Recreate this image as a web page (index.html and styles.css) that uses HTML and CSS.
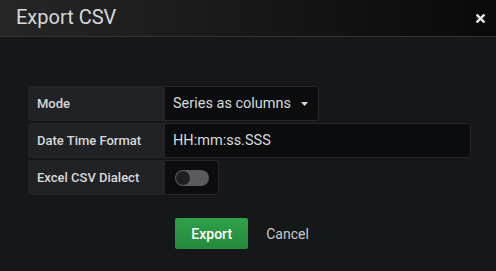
FILE: index.html
```html
<!DOCTYPE html>
<html>
<head>
<meta charset="utf-8">
<link rel="stylesheet" href="styles.css">
</head>
<body>
<div class="modal">
  <div class="modal-header">
    <h2 class="modal-title">Export CSV</h2>
    <button class="close-btn" aria-label="Close">
      <svg width="9" height="9" viewBox="0 0 9 9"><path d="M1.4 1.4 L7.6 7.6 M7.6 1.4 L1.4 7.6" stroke="#e6e6e6" stroke-width="2.4" stroke-linecap="square"/></svg>
    </button>
  </div>
  <div class="modal-body">
    <div class="form">
      <div class="form-row">
        <label class="form-label">Mode</label>
        <div class="form-select">
          <span>Series as columns</span>
          <svg class="caret" width="7" height="4" viewBox="0 0 7 4"><path d="M0 0 H7 L3.5 4 Z" fill="#d8d9da"/></svg>
        </div>
      </div>
      <div class="form-row">
        <label class="form-label">Date Time Format</label>
        <div class="form-input">HH:mm:ss.SSS</div>
      </div>
      <div class="form-row">
        <label class="form-label">Excel CSV Dialect</label>
        <div class="form-switch">
          <span class="switch-track"><span class="switch-knob"></span></span>
        </div>
      </div>
    </div>
    <div class="actions">
      <button class="btn btn-primary">Export</button>
      <button class="btn btn-link">Cancel</button>
    </div>
  </div>
</div>
</body>
</html>
```

FILE: styles.css
```css
html, body {
  margin: 0;
  padding: 0;
  background: #161719;
  font-family: Roboto, "Liberation Sans", sans-serif;
}
.modal {
  width: 496px;
  height: 271px;
  background: #161719;
  display: flex;
  flex-direction: column;
  overflow: hidden;
}
.modal-header {
  height: 36px;
  border-bottom: 1px solid #333336;
  background: linear-gradient(90deg, #262628, #09090a);
  display: flex;
  align-items: center;
  justify-content: space-between;
  padding: 0 11px 0 16px;
  flex: none;
}
.modal-title {
  margin: 0;
  font-size: 20px;
  font-weight: 400;
  color: #d8d9da;
  line-height: 36px;
  position: relative;
  top: -1px;
}
.close-btn {
  background: none;
  border: none;
  padding: 0;
  width: 10px;
  height: 12px;
  display: flex;
  align-items: center;
  justify-content: center;
}
.modal-body {
  padding: 49px 25px 0 28px;
  display: flex;
  flex-direction: column;
}
.form {
  display: flex;
  flex-direction: column;
  gap: 2px;
}
.form-row {
  display: flex;
  height: 35px;
}
.form-label {
  width: 136px;
  box-sizing: border-box;
  background: #202226;
  border: 1px solid #222428;
  border-radius: 3px 0 0 3px;
  color: #d8d9da;
  font-size: 13px;
  font-weight: 500;
  padding: 0 8px;
  display: flex;
  align-items: center;
}
.form-select, .form-input, .form-switch {
  box-sizing: border-box;
  background: #0b0c0e;
  border: 1px solid #262628;
  border-radius: 0 3px 3px 0;
  color: #d8d9da;
  font-size: 14.5px;
  display: flex;
  align-items: center;
  padding: 0 8px;
}
.form-select {
  width: 155px;
  justify-content: space-between;
}
.caret {
  margin-right: 2px;
  margin-top: 1px;
}
.form-input {
  width: 307px;
}
.form-switch {
  width: 55px;
  padding: 0 0 0 10px;
}
.switch-track {
  width: 33px;
  height: 16px;
  border-radius: 8px;
  background: #5b5b5e;
  display: flex;
  align-items: center;
  padding-left: 1px;
}
.switch-knob {
  width: 14px;
  height: 14px;
  border-radius: 50%;
  background: #1e1f22;
}
.actions {
  display: flex;
  justify-content: center;
  gap: 8px;
  margin-top: 23px;
  padding-right: 5px;
}
.btn {
  font-family: Roboto, "Liberation Sans", sans-serif;
  font-size: 14px;
  font-weight: 500;
  height: 31px;
  border: none;
  border-radius: 2px;
  cursor: pointer;
}
.btn-primary {
  width: 73px;
  background: linear-gradient(180deg, #2ea04a, #258a3d);
  color: #ffffff;
}
.btn-link {
  background: none;
  color: #c8c9ca;
  font-weight: 400;
  padding: 0 10px;
}
```
